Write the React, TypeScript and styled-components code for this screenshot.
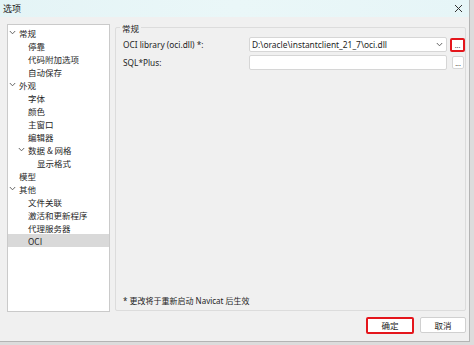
import styled, { createGlobalStyle } from "styled-components";

const GlobalStyle = createGlobalStyle`
  html, body {
    margin: 0;
    padding: 0;
    background: #dcdcdc;
  }
  body {
    font-family: "Noto Sans", "Noto Sans CJK SC", sans-serif;
    font-size: 9px;
    color: #1e1e1e;
  }
`;

type Node = { label: string; level: number; open?: boolean; selected?: boolean };

const tree: Node[] = [
  { label: "常规", level: 0, open: true },
  { label: "停靠", level: 1 },
  { label: "代码附加选项", level: 1 },
  { label: "自动保存", level: 1 },
  { label: "外观", level: 0, open: true },
  { label: "字体", level: 1 },
  { label: "颜色", level: 1 },
  { label: "主窗口", level: 1 },
  { label: "编辑器", level: 1 },
  { label: "数据 & 网格", level: 1, open: true },
  { label: "显示格式", level: 2 },
  { label: "模型", level: 0 },
  { label: "其他", level: 0, open: true },
  { label: "文件关联", level: 1 },
  { label: "激活和更新程序", level: 1 },
  { label: "代理服务器", level: 1 },
  { label: "OCI", level: 1, selected: true },
];

const Chevron = () => (
  <svg width="7" height="5" viewBox="0 0 7 5">
    <path d="M0.8 1 L3.5 3.8 L6.2 1" fill="none" stroke="#555" strokeWidth="0.9" />
  </svg>
);

export default function App() {
  return (
    <>
      <GlobalStyle />
      <Window>
        <TitleBar>
          <Title>选项</Title>
          <Close>
            <svg width="9" height="9" viewBox="0 0 9 9">
              <path d="M1 1 L8 8 M8 1 L1 8" stroke="#333" strokeWidth="1" />
            </svg>
          </Close>
        </TitleBar>

        <Body>
          <Tree>
            {tree.map((n) => (
              <TreeRow key={n.label} $level={n.level} $selected={n.selected}>
                <Toggle>{n.open && <Chevron />}</Toggle>
                <span>{n.label}</span>
              </TreeRow>
            ))}
          </Tree>

          <Group>
            <GroupLabel>常规</GroupLabel>
            <FieldRow>
              <FieldLabel>OCI library (oci.dll) *:</FieldLabel>
              <Input>
                <InputText>D:\oracle\instantclient_21_7\oci.dll</InputText>
                <Chevron />
              </Input>
              <DotsButton $highlight>...</DotsButton>
            </FieldRow>
            <FieldRow>
              <FieldLabel>SQL*Plus:</FieldLabel>
              <Input />
              <DotsButton>...</DotsButton>
            </FieldRow>
            <Note>* 更改将于重新启动 Navicat 后生效</Note>
          </Group>
        </Body>

        <Footer>
          <Button $highlight>确定</Button>
          <Button>取消</Button>
        </Footer>
      </Window>
    </>
  );
}

const Window = styled.div`
  width: 469px;
  height: 341px;
  background: #f0f0f0;
  border-right: 1px solid #b4b4b4;
  border-bottom: 1px solid #b4b4b4;
  display: flex;
  flex-direction: column;
  box-sizing: content-box;
`;

const TitleBar = styled.div`
  height: 17px;
  display: flex;
  align-items: center;
  justify-content: space-between;
  padding: 0 6px 0 3px;
  background: linear-gradient(90deg, #e4f4f6, #eaf7f8 50%, #e6f5f7);
`;

const Title = styled.div`
  font-size: 9px;
  font-family: "Noto Sans CJK SC", sans-serif;
  color: #222;
`;

const Close = styled.div`
  display: flex;
  align-items: center;
`;

const Body = styled.div`
  display: flex;
  gap: 5px;
  padding: 7px 3px 0 7px;
  height: 287px;
`;

const Tree = styled.div`
  flex-shrink: 0;
  width: 101px;
  height: 285px;
  background: #fff;
  border: 1px solid #cacaca;
  padding-top: 1px;
  box-sizing: content-box;
  font-family: "Noto Sans CJK SC", sans-serif;
  font-size: 8.5px;
`;

const TreeRow = styled.div<{ $level: number; $selected?: boolean }>`
  height: 13px;
  display: flex;
  align-items: center;
  padding-left: ${(p) => 1 + p.$level * 9}px;
  background: ${(p) => (p.$selected ? "#d9d9d9" : "transparent")};
  color: #262626;
`;

const Toggle = styled.span`
  width: 10px;
  display: flex;
  align-items: center;
`;

const Group = styled.div`
  flex: 1;
  min-width: 0;
  position: relative;
  border: 1px solid #dcdcdc;
  border-radius: 2px;
  margin-top: 3px;
  padding: 9px 2px 4px 7px;
  display: flex;
  flex-direction: column;
  gap: 3px;
`;

const GroupLabel = styled.div`
  position: absolute;
  top: -6px;
  left: 4px;
  padding: 0 2px;
  background: #f0f0f0;
  font-family: "Noto Sans CJK SC", sans-serif;
  font-size: 8.5px;
`;

const FieldRow = styled.div`
  display: flex;
  align-items: center;
  height: 15px;
`;

const FieldLabel = styled.div`
  width: 126px;
  flex-shrink: 0;
  font-size: 8.3px;
`;

const Input = styled.div`
  flex-shrink: 0;
  width: 191px;
  height: 13px;
  background: #fff;
  border: 1px solid #d6d6d6;
  border-radius: 2px;
  display: flex;
  align-items: center;
  justify-content: space-between;
  padding: 0 3px 0 2px;
  box-sizing: content-box;
  margin-right: 3px;
`;

const InputText = styled.span`
  font-size: 8.4px;
`;

const DotsButton = styled.div<{ $highlight?: boolean }>`
  flex-shrink: 0;
  width: ${(p) => (p.$highlight ? "11px" : "10px")};
  height: ${(p) => (p.$highlight ? "10px" : "11px")};
  margin-left: ${(p) => (p.$highlight ? "0" : "2px")};
  background: #fff;
  border: ${(p) => (p.$highlight ? "2px solid #e4161c" : "1px solid #d6d6d6")};
  border-radius: 2px;
  display: flex;
  align-items: flex-end;
  justify-content: center;
  font-size: 7px;
  line-height: 8px;
  color: #444;
`;

const Note = styled.div`
  margin-top: auto;
  font-family: "Noto Sans", "Noto Sans CJK SC", sans-serif;
  font-size: 8px;
`;

const Footer = styled.div`
  flex: 1;
  display: flex;
  justify-content: flex-end;
  align-items: center;
  gap: 6px;
  padding: 0 3px 2px 0;
`;

const Button = styled.div<{ $highlight?: boolean }>`
  width: 44px;
  height: ${(p) => (p.$highlight ? "13px" : "14px")};
  background: #fff;
  border: ${(p) => (p.$highlight ? "2px solid #e4161c" : "1px solid #d0d0d0")};
  border-radius: 2px;
  display: flex;
  align-items: center;
  justify-content: center;
  font-family: "Noto Sans CJK SC", sans-serif;
  font-size: 8.5px;
  color: #222;
`;
